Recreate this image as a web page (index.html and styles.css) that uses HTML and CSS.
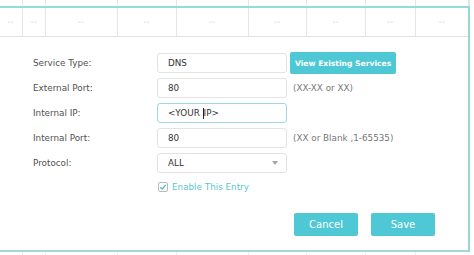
FILE: index.html
```html
<!DOCTYPE html>
<html lang="en">
<head>
  <meta charset="UTF-8">
  <meta name="viewport" content="width=device-width, initial-scale=1.0">
  <title>Port Forwarding - Edit Entry</title>
  <link rel="stylesheet" href="styles.css">
</head>
<body>
  <div class="grid">
    <div class="cells prev">
      <div class="cell"></div><div class="cell"></div><div class="cell"></div>
      <div class="cell"></div><div class="cell"></div><div class="cell"></div>
      <div class="cell"></div><div class="cell"></div><div class="cell"></div>
    </div>

    <div class="editor">
      <div class="cells row">
        <div class="cell">--</div><div class="cell">--</div><div class="cell">--</div>
        <div class="cell">--</div><div class="cell">--</div><div class="cell">--</div>
        <div class="cell">--</div><div class="cell">--</div><div class="cell">--</div>
      </div>

      <form class="form" id="entryForm">
        <div class="frow">
          <span class="flabel">Service Type:</span>
          <span class="field">DNS</span>
          <button type="button" class="btn-view">View Existing Services</button>
        </div>
        <div class="frow">
          <span class="flabel">External Port:</span>
          <span class="field">80</span>
          <span class="hint">(XX-XX or XX)</span>
        </div>
        <div class="frow">
          <span class="flabel">Internal IP:</span>
          <span class="field focus">&lt;YOUR&nbsp;<span class="caret"></span>IP&gt;</span>
        </div>
        <div class="frow">
          <span class="flabel">Internal Port:</span>
          <span class="field">80</span>
          <span class="hint">(XX or Blank ,1-65535)</span>
        </div>
        <div class="frow">
          <span class="flabel">Protocol:</span>
          <span class="field select">ALL<span class="arrow"></span></span>
        </div>
        <label class="check">
          <span class="box">
            <svg width="8" height="8" viewBox="0 0 8 8"><path d="M1.3 4.2 L3.2 6 L6.8 1.8" fill="none" stroke="#4bbcc8" stroke-width="1.3"/></svg>
          </span>
          Enable This Entry
        </label>
        <div class="actions">
          <button type="button" class="btn">Cancel</button>
          <button type="button" class="btn">Save</button>
        </div>
      </form>
    </div>

    <div class="cells next">
      <div class="cell"></div><div class="cell"></div><div class="cell"></div>
      <div class="cell"></div><div class="cell"></div><div class="cell"></div>
      <div class="cell"></div><div class="cell"></div><div class="cell"></div>
    </div>
  </div>
</body>
</html>
```

FILE: styles.css
```css
body { margin: 0; font-family: "DejaVu Sans", Verdana, sans-serif; font-size: 8.8px; color: #505050; background: #fff; }
.grid { width: 470px; }
.cells { display: grid; grid-template-columns: 23px 23px 72px 59px 72px 58px 59px 50px 1fr; }
.cell { border-right: 1px solid #e6e6e6; text-align: center; }
.cell:last-child { border-right: none; }
.prev { height: 6px; border-right: 2px solid #e6e6e6; box-sizing: border-box; }
.next { height: 4px; }
.next .cell { border-right-color: #eeeeee; }

.editor { border-top: 2px solid #93ddd8; border-right: 2px solid #93d8d6; border-bottom: 2px solid #a7d5d9; }
.row { height: 29px; border-bottom: 1px solid #e3e3e3; box-sizing: border-box; }
.row .cell { display: flex; align-items: center; justify-content: center; color: #c4c4c4; font-size: 7px; letter-spacing: 0.6px; }

.form { padding: 16px 33px 14px; }
.frow { display: flex; align-items: center; height: 20px; margin-bottom: 5px; }
.flabel { width: 124px; flex: none; }
.field { width: 130px; height: 20px; box-sizing: border-box; border: 1px solid #e3e3e3; border-radius: 3px; padding-left: 10px; display: flex; align-items: center; color: #333; flex: none; }
.field.focus { border-color: #9dd9de; }
.caret { display: inline-block; width: 1px; height: 11px; background: #222; }
.select .arrow { margin-left: auto; margin-right: 8px; border-left: 3.5px solid transparent; border-right: 3.5px solid transparent; border-top: 4px solid #a5a5a5; }
.hint { margin-left: 6px; color: #777; }
.btn-view { margin-left: 3px; height: 22px; padding: 0 5px; border: none; border-radius: 2px; background: #4ec8d4; color: #fff; font: inherit; font-weight: bold; font-size: 7.6px; }

.check { display: flex; align-items: center; height: 18px; margin-left: 125px; color: #5cc6d1; }
.box { width: 10px; height: 10px; box-sizing: border-box; border: 1px solid #b9b9b9; border-radius: 2px; display: flex; align-items: center; justify-content: center; margin-right: 4px; }

.actions { display: flex; justify-content: flex-end; gap: 13px; margin-top: 17px; }
.btn { width: 64px; height: 23px; border: none; border-radius: 2px; background: #4ec8d4; color: #fff; font: inherit; font-size: 10px; }
```
